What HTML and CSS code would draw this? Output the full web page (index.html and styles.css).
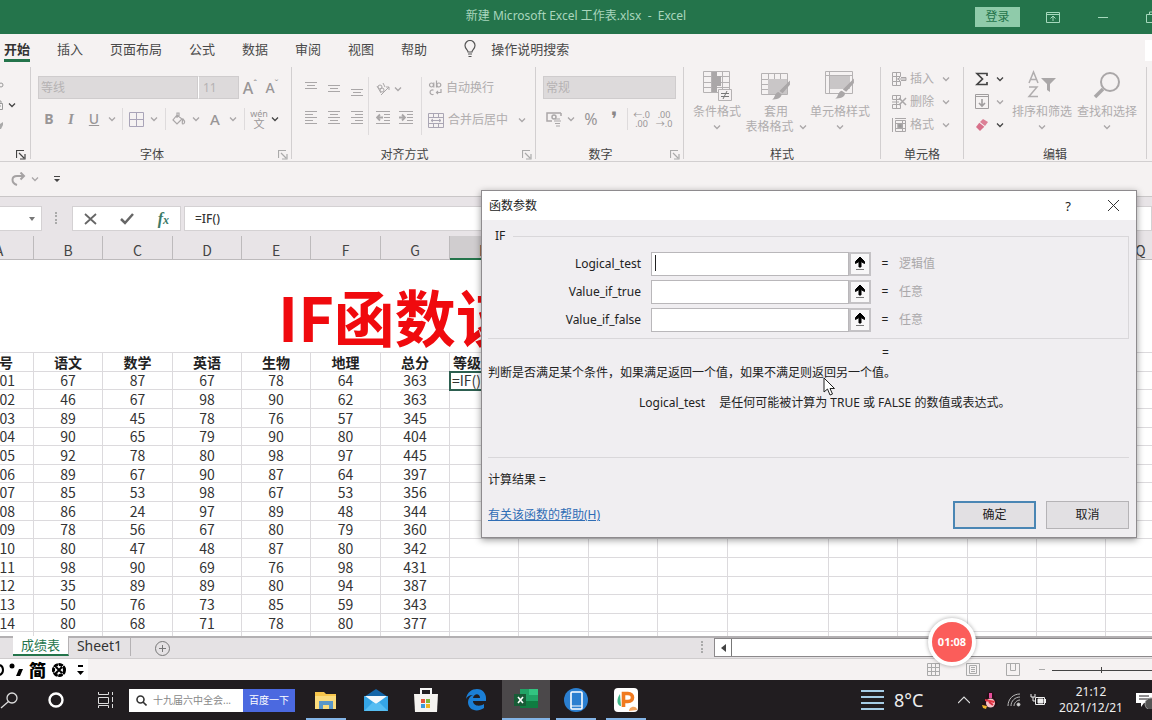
FILE: index.html
```html
<!DOCTYPE html>
<html lang="zh-CN">
<head>
<meta charset="utf-8">
<title>新建 Microsoft Excel 工作表.xlsx - Excel</title>
<link rel="stylesheet" href="styles.css">
</head>
<body>
<svg class="defs" aria-hidden="true">
  <symbol id="chev" viewBox="0 0 8 8"><path d="M1 2.5 4 5.5 7 2.5" fill="none" stroke="currentColor" stroke-width="1.3"/></symbol>
  <symbol id="launch" viewBox="0 0 10 10"><path d="M.5 8V.5H8M3 3l5 5M9 4v5H4" fill="none" stroke="currentColor" stroke-width="1.2"/></symbol>
  <symbol id="brush" viewBox="0 0 20 20"><path d="M19 1v4l-7 8-3-2zM8 12l3 2c0 4-5 5-9 5 3-1 2-6 6-7z" fill="#aaa7a8"/></symbol>
  <symbol id="pick" viewBox="0 0 16 18"><path d="M8 2 3.500 6.500v2L7 6.500V12h2V6.500l3.500 2v-2z" fill="#000" stroke="#000"/><path d="M4 14.500h8" stroke="#777"/></symbol>
</svg>
<div class="app">
  <header class="titlebar">
    <h1 class="doc-title">新建 Microsoft Excel 工作表.xlsx&nbsp; -&nbsp; Excel</h1>
    <div class="window-tools">
      <button class="login">登录</button>
      <button aria-label="功能区显示选项"><svg width="14" height="12" viewBox="0 0 14 12" fill="none" stroke="#a6d9bd"><path d="M.5 1.500h13v10H.5zM.5 3.500h13M7 10V5.500M4.500 7.500 7 5l2.500 2.500"/></svg></button>
      <button aria-label="最小化"><svg width="10" height="10" viewBox="0 0 10 10"><path d="M0 5.500h10" stroke="#a6d9bd"/></svg></button>
      <button aria-label="还原"><svg width="12" height="12" viewBox="0 0 12 12" fill="none" stroke="#a6d9bd"><path d="M.5 3.500h8v8h-8zM3.500 3V1h8v8H9"/></svg></button>
    </div>
  </header>

  <nav class="tabs">
    <button class="tab active">开始</button><button class="tab">插入</button><button class="tab">页面布局</button><button class="tab">公式</button><button class="tab">数据</button><button class="tab">审阅</button><button class="tab">视图</button><button class="tab">帮助</button>
    <button class="tab tell"><svg width="14" height="18" viewBox="0 0 14 18" fill="none" stroke="#555" stroke-width="1.200"><path d="M5 12c0-2-3-3-3-6.500a5 5 0 0 1 10 0C12 9 9 10 9 12zM5 14h4M5.500 16.500h3"/></svg>操作说明搜索</button>
    <span class="share"></span>
  </nav>

  <section class="ribbon">
    <div class="group">
      <div class="clip">
        <svg width="8" height="12" viewBox="0 0 8 12" fill="none" stroke="#999"><circle cx="1" cy="7" r="2"/></svg>
        <div><svg width="8" height="12" viewBox="0 0 8 12" fill="none" stroke="#999"><path d="M0 2h1v2M0 4.500h2.500v6H0M0 7h1"/></svg><svg class="chev dark"><use href="#chev"/></svg></div>
        <svg width="8" height="12" viewBox="0 0 8 12"><path d="M0 4l3-2v3L1 9H0z" fill="#aaa"/></svg>
      </div>
      <div class="group-name"><svg class="launch dark"><use href="#launch"/></svg></div>
    </div>

    <div class="group">
      <div class="group-body rows">
        <div class="font-selects">
          <select aria-label="字体" class="box"><option>等线</option></select>
          <select aria-label="字号" class="box"><option>11</option></select>
          <button class="grow" aria-label="增大字号">A<sup>ˆ</sup></button>
          <button class="grow small" aria-label="减小字号">A<sup>ˇ</sup></button>
        </div>
        <div class="font-row">
          <button class="b">B</button><button class="i">I</button><button class="u">U</button><svg class="chev"><use href="#chev"/></svg>
          <i class="bar"></i>
          <button aria-label="边框"><svg width="15" height="15" viewBox="0 0 15 15" fill="none" stroke="#a9a4b8"><path d="M.5.5h14v14H.5zM7.500 1v13M1 7.500h13"/></svg></button><svg class="chev"><use href="#chev"/></svg>
          <i class="bar"></i>
          <button aria-label="填充颜色"><svg width="14" height="14" viewBox="0 0 14 14" fill="none" stroke="#aaa7a8" stroke-width="1.200"><path d="M5 3 1 8l4 4 5-5zM5 6V1h2v4M11 7c3 3 1 5 0 5s-1-2 0-5z"/></svg></button><svg class="chev"><use href="#chev"/></svg>
          <button class="a">A</button><svg class="chev"><use href="#chev"/></svg>
          <i class="bar"></i>
          <button class="wen"><span>wén</span><span>文</span></button><svg class="chev dark"><use href="#chev"/></svg>
        </div>
      </div>
      <div class="group-name">字体<svg class="launch"><use href="#launch"/></svg></div>
    </div>

    <div class="group">
      <div class="group-body align">
        <div class="align-grid">
          <svg viewBox="0 0 14 16"><path d="M1 1.500h12M3 4.500h8M1 7.500h12"/></svg>
          <svg viewBox="0 0 14 16"><path d="M1 4.500h12M3 7.500h8M1 10.500h12"/></svg>
          <svg viewBox="0 0 14 16"><path d="M1 8.500h12M3 11.500h8M1 14.500h12"/></svg>
          <svg viewBox="0 0 14 16"><path d="M1 1.500h12M1 4.500h8M1 7.500h12M1 10.500h8M1 13.500h12"/></svg>
          <svg viewBox="0 0 14 16"><path d="M1 1.500h12M3 4.500h8M1 7.500h12M3 10.500h8M1 13.500h12"/></svg>
          <svg viewBox="0 0 14 16"><path d="M1 1.500h12M5 4.500h8M1 7.500h12M5 10.500h8M1 13.500h12"/></svg>
        </div>
        <i class="bar"></i>
        <div class="align-grid two">
          <svg viewBox="0 0 14 16"><circle cx="4" cy="6" r="2"/><circle cx="6" cy="9" r="2"/><path d="M1 5l4 7M5 14l8-8M10 6h3v3M7 2l2 4"/></svg>
          <svg class="chev"><use href="#chev"/></svg>
          <svg viewBox="0 0 14 16"><path d="M0 1.500h14M8 4.500h6M8 7.500h6M8 10.500h6M0 13.500h14"/><path d="M7 7.500H1M4 4.500l-3 3 3 3" stroke-width="1.800"/></svg>
          <svg viewBox="0 0 14 16"><path d="M0 1.500h14M8 4.500h6M8 7.500h6M8 10.500h6M0 13.500h14"/><path d="M0 7.500h6M3 4.500l3 3-3 3" stroke-width="1.800"/></svg>
        </div>
        <i class="bar"></i>
        <div class="wraps">
          <button><svg width="14" height="16" viewBox="0 0 14 16" fill="none" stroke="#aaa7a8" stroke-width="1.200"><circle cx="3.500" cy="5" r="2"/><path d="M5.800 2.500V7.500M8.500.5v7M5.500 10.200a2.300 2.300 0 1 0 0 4M13 9v3.500H8.500M10 11l-1.500 1.500L10 14"/><circle cx="10.800" cy="5" r="2"/></svg>自动换行</button>
          <button><svg width="16" height="15" viewBox="0 0 16 15" fill="none" stroke="#aaa6b4"><path d="M.5.5h15v14H.5zM.5 4.500h15M.5 10.500h15M5.500.5v4M10.500.5v4M5.500 10.500v4M10.500 10.500v4M3 7.500h10M5 6 3 7.500 5 9M11 6l2 1.500L11 9"/></svg>合并后居中<svg class="chev"><use href="#chev"/></svg></button>
        </div>
      </div>
      <div class="group-name">对齐方式<svg class="launch"><use href="#launch"/></svg></div>
    </div>

    <div class="group">
      <div class="group-body rows">
        <select aria-label="数字格式" class="box"><option>常规</option></select>
        <div class="num-row">
          <button aria-label="会计数字格式"><svg width="17" height="15" viewBox="0 0 17 15" fill="none" stroke="#aaa7a8" stroke-width="1.500"><path d="M15 1H1v8h5M15 1v3"/><circle cx="8" cy="5" r="2"/><path d="M8 9h7M9 11.500h5M10 14h4M9 7h5" stroke-width="1"/></svg></button><svg class="chev"><use href="#chev"/></svg>
          <button class="pct">%</button><button class="comma">❜</button><i class="bar"></i>
          <button class="dec"><span>←.0</span><span>.00</span></button><button class="dec"><span>.00</span><span>→.0</span></button>
        </div>
      </div>
      <div class="group-name">数字<svg class="launch"><use href="#launch"/></svg></div>
    </div>

    <div class="group">
      <div class="group-body styles">
        <button class="big"><svg width="30" height="32" viewBox="0 0 30 32" fill="none" stroke="#b5b2b3"><path d="M1.500 1.500h26v21h-26zM1.500 6.500h26M1.500 12.500h26M1.500 17.500h26M9.500 1v21M20.500 1v21"/><path d="M10 2h5v20h-5zM15 6h4v10h-4z" fill="#aaa7a8" stroke="none"/><path d="M16.500 19.500h13v11h-13z" fill="#f5f1f2"/><path d="M19 23.500h8M19 26.500h8M25 21l-4 8" stroke="#777"/></svg><span>条件格式</span><svg class="chev"><use href="#chev"/></svg></button>
        <button class="big"><svg width="32" height="32" viewBox="0 0 32 32" fill="none" stroke="#b5b2b3"><path d="M1.500 3.500h26v21h-26zM1.500 9.500h26M1.500 14.500h26M1.500 19.500h26M8.500 3v21M14.500 3v21M20.500 3v21"/><path d="M8 9h19v15H8z" fill="#c9c6c7" stroke="none"/><svg x="10" y="9" width="21" height="22" stroke="none"><use href="#brush"/></svg></svg><span>套用</span><span>表格格式 <svg class="chev"><use href="#chev"/></svg></span></button>
        <button class="big"><svg width="32" height="32" viewBox="0 0 32 32" fill="none" stroke="#b5b2b3"><path d="M1.500 1.500h27v22h-27zM1.500 5.500h27M5.500 1v22"/><path d="M6 6h20v13H6z" fill="#c9c6c7" stroke="none"/><svg x="9" y="7" width="22" height="23" stroke="none"><use href="#brush"/></svg></svg><span>单元格样式</span><svg class="chev"><use href="#chev"/></svg></button>
      </div>
      <div class="group-name">样式</div>
    </div>

    <div class="group">
      <div class="group-body cells">
        <button><svg width="16" height="16" viewBox="0 0 16 16" fill="none" stroke="#aaa7a8"><path d="M1.500 1.500h8v4h-8zM1.500 10.500h8v4h-8zM5.500 1.500v13M1.500 5.500v5M5 8h10M9 6 7 8l2 2M10 6.500h5v3h-5"/></svg>插入<svg class="chev"><use href="#chev"/></svg></button>
        <button><svg width="16" height="16" viewBox="0 0 16 16" fill="none" stroke="#aaa7a8"><path d="M1.500 1.500h8v4h-8zM1.500 10.500h8v4h-8zM5.500 1.500v13M1 8h7"/><path d="M8 4l7 7M15 4l-7 7" stroke-width="1.500"/></svg>删除<svg class="chev"><use href="#chev"/></svg></button>
        <button><svg width="16" height="16" viewBox="0 0 16 16" fill="none" stroke="#aaa7a8"><path d="M4.500 3.500h10v11h-10zM1.500 1v14M4 1.500h11M4.500 6.500h10M4.500 11.500h10M11.500 4v10M7 7h4v4H7z"/><path d="M7 7h4v4H7z" fill="#999"/></svg>格式<svg class="chev"><use href="#chev"/></svg></button>
      </div>
      <div class="group-name">单元格</div>
    </div>

    <div class="group">
      <div class="group-body edit">
        <div class="edit-tools">
          <button aria-label="自动求和"><svg width="14" height="14" viewBox="0 0 14 14" fill="none" stroke="#444" stroke-width="1.700"><path d="M12 4V1.500H2L7.500 7 2 12.500h10V10"/></svg><svg class="chev dark"><use href="#chev"/></svg></button>
          <button aria-label="填充"><svg width="14" height="15" viewBox="0 0 14 15" fill="none" stroke="#a09d9e"><path d="M.5.5h13v14H.5zM.5 2.500h13"/><path d="M7 5v7M4 9l3 3 3-3" stroke-width="1.600"/></svg><svg class="chev"><use href="#chev"/></svg></button>
          <button aria-label="清除"><svg width="14" height="14" viewBox="0 0 14 14"><path d="M8 1 13 4 10 8 5 4z" fill="#dc8096"/><path d="M4.300 4.700 9.300 8.800 5 13 1 9z" fill="#d8708a"/></svg><svg class="chev dark"><use href="#chev"/></svg></button>
        </div>
        <button class="big"><svg width="30" height="32" viewBox="0 0 30 32" fill="none" stroke="#b0adae" stroke-width="1.500"><path d="M2 13 6.500 2 11 13M3.500 9.500h6M2 17h8L2 26.500h9"/><path d="M14 8h15l-6 6v8l-3-2v-6z" fill="#aaa7a8" stroke="none"/></svg><span>排序和筛选</span><svg class="chev"><use href="#chev"/></svg></button>
        <button class="big"><svg width="30" height="32" viewBox="0 0 30 32" fill="none" stroke="#aaa7a8"><circle cx="18" cy="12" r="9" stroke-width="2"/><path d="M11 19 3 27" stroke-width="3.500"/></svg><span>查找和选择</span><svg class="chev"><use href="#chev"/></svg></button>
      </div>
      <div class="group-name">编辑</div>
    </div>
  </section>

  <div class="quick">
    <svg width="15" height="14" viewBox="0 0 15 14" fill="none" stroke="#a5a2a3" stroke-width="2"><path d="M6 13C0 11 0 4 6 4h7M9.500.5 13 4 9.500 7.500"/></svg>
    <svg class="chev"><use href="#chev"/></svg>
    <svg class="more" width="8" height="8" viewBox="0 0 8 8"><path d="M1 1h6v1H1zM1 4h6L4 7z" fill="#444"/></svg>
  </div>

  <div class="formula">
    <div class="name-box"><svg width="8" height="6" viewBox="0 0 8 6"><path d="M1 1h6L4 5z" fill="#777"/></svg></div>
    <span class="dots"></span>
    <div class="fx">
      <button aria-label="取消输入"><svg width="13" height="12" viewBox="0 0 13 12" fill="none" stroke="#666" stroke-width="1.800"><path d="M1 1l11 10M12 1 1 11"/></svg></button>
      <button aria-label="输入"><svg width="14" height="12" viewBox="0 0 14 12" fill="none" stroke="#666" stroke-width="2.500"><path d="M1 6l4 4 8-9"/></svg></button>
      <button class="fn" aria-label="插入函数">f<small>x</small></button>
    </div>
    <input aria-label="编辑栏" value="=IF()">
  </div>

  <main class="sheet">
    <table>
      <colgroup><col class="c69"><col class="c69"><col class="c70"><col class="c69"><col class="c69"><col class="c70"><col class="c69"><col class="c69"><col class="c70"><col class="c69"><col class="c70"><col class="c101"><col class="c69"><col class="c70"><col class="c69"><col class="c69"><col class="c70"></colgroup>
      <thead><tr><th>A</th><th>B</th><th>C</th><th>D</th><th>E</th><th>F</th><th>G</th><th class="sel">H</th><th>I</th><th>J</th><th>K</th><th>L</th><th>M</th><th>N</th><th>O</th><th>P</th><th>Q</th></tr></thead>
      <tbody id="grid">
        <tr class="title-row"><td colspan="17">IF函数该</td></tr>
        <tr class="head-row"><td>学号</td><td>语文</td><td>数学</td><td>英语</td><td>生物</td><td>地理</td><td>总分</td><td>等级</td><td></td><td></td><td></td><td></td><td></td><td></td><td></td><td></td><td></td></tr>
      </tbody>
    </table>
  </main>

  <div class="sheet-bar">
    <button class="sheet-tab on">成绩表</button>
    <button class="sheet-tab">Sheet1</button>
    <button class="add" aria-label="新工作表"><svg width="15" height="15" viewBox="0 0 15 15" fill="none" stroke="#777"><circle cx="7.500" cy="7.500" r="7"/><path d="M7.500 4v7M4 7.500h7"/></svg></button>
    <span class="dots"></span>
    <div class="scroll"><button aria-label="向左滚动"><svg width="5" height="8" viewBox="0 0 5 8"><path d="M5 0v8L0 4z" fill="#444"/></svg></button></div>
  </div>

  <div class="status">
    <div class="ime">
      <svg width="4" height="16" viewBox="0 0 4 16"><path d="M0 3c4 2 4 8 0 10" fill="none" stroke="#000" stroke-width="2"/></svg>
      <svg width="15" height="14" viewBox="0 0 15 14"><circle cx="3" cy="3" r="2.500"/><path d="M10 6h4l-3 7H7z"/></svg>
      <b>简</b>
      <svg width="16" height="16" viewBox="0 0 16 16"><circle cx="8" cy="8" r="5.500" fill="none" stroke="#000" stroke-width="3" stroke-dasharray="4 1"/><circle cx="8" cy="8" r="6" fill="none" stroke="#000"/><path d="M5 5l6 6M11 5l-6 6" stroke="#000" stroke-width="2"/></svg>
      <svg width="7" height="12" viewBox="0 0 7 12"><path d="M1 1h5v2H1zM0 7h7L3.500 11z"/></svg>
    </div>
    <div class="views">
      <svg width="13" height="13" viewBox="0 0 13 13"><path d="M.5.5h12v12H.5zM4.500 0v13M8.500 0v13M0 4.500h13M0 8.500h13"/></svg>
      <svg width="14" height="13" viewBox="0 0 14 13"><path d="M.5.5h13v12H.5zM3.500 2.500h7v8h-7zM5 4.500h4M5 6.500h4M5 8.500h4"/></svg>
      <svg width="14" height="13" viewBox="0 0 14 13"><path d="M.5.5h13v12H.5zM4.500 0v7.500h5V0"/></svg>
    </div>
    <span class="zoom-out"></span>
    <svg class="zoom" width="100" height="8" viewBox="0 0 100 8" stroke="#444"><path d="M0 4.500h100M49.500 1v6"/></svg>
  </div>

  <footer class="taskbar">
    <button class="tb find" aria-label="搜索"><svg width="18" height="18" viewBox="0 0 18 18" fill="none" stroke="#ddd" stroke-width="1.300"><circle cx="12" cy="7" r="5"/><path d="M8.500 10.500 1 17"/></svg></button>
    <button class="tb cortana" aria-label="Cortana"><svg width="16" height="16" viewBox="0 0 16 16"><circle cx="8" cy="8" r="6.500" fill="none" stroke="#fff" stroke-width="2.400"/></svg></button>
    <button class="tb view" aria-label="任务视图"><svg width="18" height="16" viewBox="0 0 18 16" fill="none" stroke="#ddd"><path d="M1.500 0v2.500h10V0M1.500 5.500h10v6h-10zM1.500 16v-2.500h10V16M15.500 0v3M15.500 5v5M15.500 12v4"/></svg></button>
    <form class="search">
      <label for="q"><svg width="11" height="11" viewBox="0 0 11 11" fill="none" stroke="#333" stroke-width="1.600"><circle cx="4.500" cy="4.500" r="3.500"/><path d="M7 7l3.500 3.500"/></svg></label>
      <input id="q" placeholder="十九届六中全会...">
      <button type="button">百度一下</button>
    </form>
    <div class="apps">
      <button class="app-btn run" aria-label="文件资源管理器"><svg width="22" height="19" viewBox="0 0 22 19"><path d="M0 1h9l2 2h10v15H0z" fill="#f7c64c"/><path d="M0 5h21v13H0z" fill="#fbdc7d"/><path d="M4 10h14v8h-4v-4H8v4H4z" fill="#5a97c9"/></svg></button>
      <button class="app-btn" aria-label="邮件"><svg width="24" height="22" viewBox="0 0 24 22"><path d="M0 8 12 0l12 8z" fill="#1265a8"/><path d="M0 7h24v15H0z" fill="#35a5e6"/><path d="M1 7h22L12 15z" fill="#f4f8fb"/><path d="M0 22 9 13l3 2 3-2 9 9z" fill="#56bdf2"/></svg></button>
      <button class="app-btn" aria-label="应用商店"><svg width="24" height="24" viewBox="0 0 24 24"><path d="M7 7V1h10v6" fill="none" stroke="#f5f5f5" stroke-width="2"/><path d="M0 6h24l-1 18H1z" fill="#f5f3f0"/><path d="M7 11h4v4H7z" fill="#e4573b"/><path d="M12 11h4v4h-4z" fill="#83b83a"/><path d="M7 16h4v4H7z" fill="#3b9bdc"/><path d="M12 16h4v4h-4z" fill="#f0b51f"/></svg></button>
      <button class="app-btn" aria-label="Edge"><svg width="22" height="22" viewBox="0 0 22 22"><path d="M1 10C2 3 7 0 12 0c6 0 9 5 9 9v3H8c0 5 7 6 11 3v4c-7 5-16 2-16-6 0-3 2-6 5-7-4 0-6 2-7 4zM8 9h7c0-5-6-5-7 0z" fill="#1b7fd6" fill-rule="evenodd"/></svg></button>
      <button class="app-btn run current" aria-label="Excel"><svg width="24" height="22" viewBox="0 0 24 22"><path d="M6 0h18v19H6z" fill="#21a366"/><path d="M15 0h9v6h-9z" fill="#33c481"/><path d="M15 12h9v7H6v-7z" fill="#107c41"/><path d="M0 5h12v12H0z" fill="#185c37"/><path d="M4 8l5 6M9 8l-5 6" stroke="#fff" stroke-width="1.600"/></svg></button>
      <button class="app-btn run" aria-label="手机助手"><svg width="24" height="24" viewBox="0 0 24 24"><circle cx="12" cy="12" r="12" fill="#2b7fd0"/><rect x="7" y="4" width="11" height="17" rx="1" fill="#2b7fd0" stroke="#fff" stroke-width="1.600"/><path d="M7 18h11" stroke="#fff"/></svg></button>
      <button class="app-btn run" aria-label="屏幕录制"><svg width="24" height="24" viewBox="0 0 24 24"><rect width="24" height="24" rx="4" fill="#fff"/><path d="M6 6c-4 5-3 12 1 12z" fill="#41b98b"/><path d="M9.500 19V5.500H14c6 0 6 8 0 8h-3" fill="none" stroke="#f07a20" stroke-width="3.600"/><path d="M15 23c0-5 8-6 8-1z" fill="#f3a45e"/></svg></button>
    </div>
    <div class="tray">
      <svg width="23" height="20" viewBox="0 0 23 20" stroke="#a6cde6" stroke-width="2"><path d="M0 1h23M0 7h23M0 13h23M0 19h23"/></svg>
      <span class="temp">8°C</span>
      <svg class="up" width="12" height="8" viewBox="0 0 12 8" fill="none" stroke="#ddd" stroke-width="1.200"><path d="M0 7l6-6 6 6"/></svg>
      <svg class="qq" width="16" height="17" viewBox="0 0 16 17"><path d="M6 0h5l2 7 3 5-3 3H2L0 11l4-4z" fill="#241017"/><path d="M7 1h3v5H7z" fill="#e64d9b"/><circle cx="8.500" cy="11" r="4.500" fill="#f9c2c9"/><path d="M3 7l10 2-1 2L3 9z" fill="#e23643"/><path d="M0 13l5 1-1 3-3-1z" fill="#f0b52c"/><path d="M7 10l4 3" stroke="#d92e42" stroke-width="2"/></svg>
      <svg class="wifi" width="14" height="14" viewBox="0 0 14 14" fill="none" stroke="#bbb"><path d="M1 13C1 6 6 1 13 1M4 13c0-5 4-9 9-9M7 13c0-3 3-6 6-6"/><circle cx="11.500" cy="11.500" r="1.500" fill="#ddd"/></svg>
      <svg class="bat" width="17" height="12" viewBox="0 0 17 12" fill="none" stroke="#eee"><path d="M5.500 3.500h9v7h-9zM15.500 5v4M1 0v3h4V0M3 3v4h2"/><path d="M8 5h5v4H8z" fill="#eee"/></svg>
      <time>21:12<br>2021/12/21</time>
      <svg class="note" width="16" height="18" viewBox="0 0 16 18"><path d="M0 2h16v10H8l-3 4v-4H0z" fill="#fff"/><path d="M3 5h10M3 8h10" stroke="#211d20"/><circle cx="15" cy="13" r="6" fill="#555" stroke="#999"/></svg>
    </div>
  </footer>

  <section class="dialog" role="dialog" aria-labelledby="dt">
    <div class="dialog-title"><h2 id="dt">函数参数</h2><button aria-label="帮助">?</button><button aria-label="关闭"><svg width="11" height="11" viewBox="0 0 11 11" stroke="#333"><path d="M0 0l11 11M11 0 0 11"/></svg></button></div>
    <div class="dialog-body">
      <fieldset>
        <legend>IF</legend>
        <div class="arg"><label for="a1">Logical_test</label><span class="field"><input id="a1"><i class="caret"></i><button aria-label="选择区域"><svg width="16" height="18"><use href="#pick"/></svg></button></span><span class="eq">=</span><span class="hint">逻辑值</span></div>
        <div class="arg"><label for="a2">Value_if_true</label><span class="field"><input id="a2"><button aria-label="选择区域"><svg width="16" height="18"><use href="#pick"/></svg></button></span><span class="eq">=</span><span class="hint">任意</span></div>
        <div class="arg"><label for="a3">Value_if_false</label><span class="field"><input id="a3"><button aria-label="选择区域"><svg width="16" height="18"><use href="#pick"/></svg></button></span><span class="eq">=</span><span class="hint">任意</span></div>
      </fieldset>
      <p class="result">=</p>
      <p class="about">判断是否满足某个条件，如果满足返回一个值，如果不满足则返回另一个值。</p>
      <p class="param"><span>Logical_test</span><span>是任何可能被计算为 TRUE 或 FALSE 的数值或表达式。</span></p>
      <p class="calc">计算结果 =</p>
      <div class="actions"><a href="#help">有关该函数的帮助(H)</a><button class="ok">确定</button><button>取消</button></div>
    </div>
  </section>

  <div class="timer">01:08</div>
  <svg class="cursor" width="13" height="19" viewBox="0 0 13 19"><path d="M1 1v14l3.500-3 2.500 6 2.500-1L7 11.500h4.500z" fill="#fff" stroke="#222"/></svg>
</div>
<script src="grid.js"></script>
</body>
</html>
```

FILE: grid.js
```js
const scores = [
  [67, 87, 67, 78, 64, 363], [46, 67, 98, 90, 62, 363], [89, 45, 78, 76, 57, 345],
  [90, 65, 79, 90, 80, 404], [92, 78, 80, 98, 97, 445], [89, 67, 90, 87, 64, 397],
  [85, 53, 98, 67, 53, 356], [86, 24, 97, 89, 48, 344], [78, 56, 67, 80, 79, 360],
  [80, 47, 48, 87, 80, 342], [98, 90, 69, 76, 98, 431], [35, 89, 89, 80, 94, 387],
  [50, 76, 73, 85, 59, 343], [80, 68, 71, 78, 80, 377], []
];
const body = document.getElementById('grid');
scores.forEach((row, r) => {
  const tr = body.insertRow();
  for (let c = 0; c < 17; c++) {
    const td = tr.insertCell();
    if (!row.length) { td.textContent = '\u00a0'; continue; }
    if (c === 0) td.textContent = String(r + 1).padStart(2, '0');
    else if (c < 7) td.textContent = row[c - 1];
    else if (c === 7 && r === 0) { td.textContent = '=IF()'; td.className = 'editing'; }
  }
});
```

FILE: styles.css
```css
* { box-sizing: border-box; }
body { margin: 0; font: 12px/16px "Noto Sans", "Noto Sans CJK SC", sans-serif; color: #333; }
button, input, select { font: inherit; color: inherit; border: 0; background: none; padding: 0; margin: 0; border-radius: 0; }
button { display: flex; align-items: center; justify-content: center; white-space: nowrap; }
h1, h2, p { margin: 0; font-size: 12px; font-weight: 400; }
svg { flex: none; display: block; }
.defs { position: absolute; width: 0; height: 0; }
.app { position: relative; display: flex; flex-direction: column; height: 100vh; overflow: hidden; background: #f5f2f2; }

.titlebar { position: relative; flex: none; height: 34px; background: #24744b; display: flex; align-items: center; justify-content: center; color: #a9d6bd; }
.doc-title { padding-bottom: 2px; white-space: nowrap; }
.window-tools { position: absolute; right: -6px; top: 7px; display: flex; align-items: center; gap: 38px; }
.login { width: 45px; height: 20px; background: #8fcbaa; color: #24744b; margin-right: -12px; }

.tabs { flex: none; height: 33px; display: flex; gap: 27px; padding: 6px 0 0 4px; font-size: 13px; line-height: 18px; color: #4a4a4a; overflow: hidden; }
.tab { height: 22px; align-items: flex-start; flex: none; }
.tab.active { font-weight: 700; border-bottom: 3px solid #24744b; color: #333; }
.tell { gap: 14px; margin-left: 9px; }
.share { margin-left: auto; width: 7px; height: 21px; background: #fff; }

.ribbon { flex: none; height: 95px; display: grid; grid-template-columns: 31px 261px 244px 148px 197px 83px 183px 1fr; border-bottom: 1px solid #d2cfd0; color: #b0adae; }
.group { display: flex; flex-direction: column; border-right: 1px solid #d2cfd0; margin-bottom: 4px; min-width: 0; }
.group-body { flex: 1; }
.group-name { position: relative; height: 17px; text-align: center; color: #444; line-height: 26px; margin-right: 18px; }
.group:nth-child(5) .group-name, .group:nth-child(6) .group-name, .group:nth-child(7) .group-name { margin-right: 0; }
.launch { position: absolute; right: -15px; bottom: -1px; width: 10px; height: 10px; color: #aaa; }
.chev { width: 8px; height: 8px; color: #aaa7a8; justify-self: center; align-self: center; }
.dark { color: #444; }
.clip { flex: 1; display: flex; flex-direction: column; gap: 9px; padding-top: 11px; }
.clip div { display: flex; }
.group:first-child .launch { right: -14px; }
.bar { width: 1px; background: #dedbdc; justify-self: center; }
.rows { padding: 9px 7px 0; display: flex; flex-direction: column; gap: 9px; }
.box { height: 23px; width: 100%; background: #dddadb; border: 1px solid #cfcccd; color: #b5b2b3; padding: 0 2px; appearance: none; opacity: 1; }
.font-selects { display: grid; grid-template-columns: 160px 41px 22px 22px; align-items: center; }
.font-selects .box + .box { border-left-color: #fff; padding-left: 4px; }
.grow { font-size: 16px; font-weight: 500; color: #999697; }
.grow.small { font-size: 14px; }
.grow sup { font-size: 9px; line-height: 8px; align-self: flex-start; }
.font-row { display: grid; height: 22px; grid-template-columns: 22px 22px 24px 12px 8px 20px 16px 6px 22px 12px 26px 10px 12px 18px 14px; }
.font-row button { font-size: 14px; color: #999697; }
.font-row .b { font-weight: 700; }
.font-row .i { font: italic 700 15px "Liberation Serif", serif; }
.font-row .u { text-decoration: underline; font-weight: 500; }
.font-row .a { font-size: 15px; font-weight: 500; }
.font-row .wen { flex-direction: column; font-size: 9px; line-height: 8px; }
.wen span + span { font-size: 11px; line-height: 11px; }

.align { display: flex; padding: 10px 0 7px 7px; }
.align-grid { display: grid; grid-template-columns: 23px 23px 23px; grid-template-rows: 24px 34px; align-items: center; justify-items: center; }
.align-grid.two { grid-template-columns: 23px 23px; margin: 0 4px 0 2px; }
.align-grid svg:not(.chev) { width: 14px; height: 16px; fill: none; stroke: #aaa7a8; }
.align-grid.two .chev { justify-self: start; }
.wraps { padding-left: 6px; display: grid; grid-template-rows: 22px 24px; row-gap: 9px; }
.wraps button { justify-content: flex-start; gap: 4px; }
.wraps .chev { margin-left: 6px; }

.num-row { display: grid; height: 22px; grid-template-columns: 22px 12px 28px 18px 8px 21px 24px; }
.pct { font-size: 16px; color: #999697; }
.comma { font-size: 20px; color: #8a8788; }
.num-row .dec { flex-direction: column; font-size: 9px; line-height: 9px; color: #999697; }

.big { flex-direction: column; justify-content: flex-start; line-height: 15px; }
.big > svg:first-child { margin-bottom: 2px; }
.big > span { display: flex; align-items: center; gap: 5px; }
.big > .chev { margin-top: 4px; }
.styles { display: grid; grid-template-columns: 58px 60px 68px; padding: 3px 0 0 4px; align-content: start; align-items: start; }
.cells { display: grid; grid-template-rows: repeat(3, 23px); padding-left: 10px; }
.cells button { justify-content: flex-start; gap: 3px; }
.cells .chev { margin-left: 5px; }
.edit { display: grid; grid-template-columns: 46px 64px 66px; align-items: start; padding-top: 3px; }
.edit-tools { display: grid; grid-template-rows: repeat(3, 23px); padding-left: 11px; margin-top: -3px; }
.edit-tools button { gap: 7px; justify-content: flex-start; }

.quick { flex: none; height: 35px; display: flex; align-items: center; padding-left: 11px; gap: 5px; border-bottom: 1px solid #c9c6c7; }
.quick .more { margin-left: 9px; }
.formula { flex: none; height: 39px; background: #e8e4e7; display: flex; align-items: flex-start; padding-top: 9px; }
.name-box, .fx, .formula input { height: 25px; background: #fff; border: 1px solid #d4d1d3; display: flex; align-items: center; }
.name-box { width: 42px; justify-content: flex-end; padding-right: 5px; border-left: 0; }
.dots { width: 2px; height: 12px; border-left: 2px dotted #aaa; margin: 6px 15px 0 13px; }
.fx { width: 109px; justify-content: space-between; padding: 0 11px; }
.fn { font: italic 700 16px "Liberation Serif", serif; color: #3b7a68; }
.fn small { font-size: 12px; padding-top: 4px; }
.formula input { flex: 1; margin-left: 3px; padding-left: 10px; font-weight: 500; }

.sheet { flex: 1; min-height: 0; overflow: hidden; background: #fff; }
table { table-layout: fixed; width: 1211px; min-width: 1211px; height: 415px; margin-left: -35px; border-collapse: separate; border-spacing: 0; font-family: "Noto Sans CJK SC", sans-serif; font-size: 14px; line-height: 16px; }
.c69 { width: 69px; } .c70 { width: 70px; } .c101 { width: 101px; }
th, td { padding: 0; text-align: center; border-right: 1px solid #dcdadd; border-bottom: 1px solid #dcdadd; overflow: hidden; white-space: nowrap; }
th { height: 24px; background: #e8e4e7; font-weight: 400; border-color: #bdbabc; color: #444; padding-top: 5px; }
th.sel { background: #d0cdcf; border-bottom: 2px solid #24744b; }
.title-row td { height: 93px; text-align: left; padding: 19px 0 0 313px; color: #f00a0e; font-size: 61px; font-weight: 700; line-height: 60px; }
.head-row td { font-weight: 700; color: #222; }
.head-row td:nth-child(8) { text-align: left; padding-left: 3px; }
tr:not(.title-row):not(.head-row) td:first-child { text-align: right; padding-right: 18px; }
td.editing { text-align: left; padding-left: 2px; outline: 2px solid #2d5f50; outline-offset: -1px; }

.sheet-bar { flex: none; height: 23px; background: #e5e2e4; border-top: 2px solid #b3b0b2; border-bottom: 1px solid #cfcccd; display: flex; padding-left: 13px; }
.sheet-tab { font-size: 14px; width: 62px; height: 18px; border-right: 1px solid #b5b2b4; padding-bottom: 2px; }
.sheet-tab.on { width: 56px; height: 20px; margin-top: -2px; font-size: 13px; color: #24744b; background: #fff; border-bottom: 2px solid #24744b; padding: 0; }
.add { margin-left: 24px; }
.sheet-bar .dots { margin: 3px 11px 0 auto; }
.scroll { width: 438px; height: 19px; border: 1px solid #8c898b; border-right: 0; background: #fff; }
.scroll button { width: 17px; height: 17px; border-right: 1px solid #777; }

.status { flex: none; height: 21px; display: flex; align-items: center; }
.ime { width: 88px; height: 21px; background: #fff; display: flex; align-items: center; gap: 5px; color: #000; }
.ime b { font: 900 17px/20px "Noto Sans CJK SC", sans-serif; }
.ime svg:last-child { margin-left: 5px; }
.views { display: flex; gap: 26px; margin-left: auto; fill: none; stroke: #aaa; }
.zoom-out { width: 6px; height: 1px; background: #aaa; margin: 0 7px 0 19px; }

.taskbar { flex: none; height: 40px; background: #211d20; display: flex; align-items: center; color: #eee; }
.find { width: 30px; justify-content: flex-start; padding-right: 12px; }
.cortana { width: 52px; }
.view { width: 47px; padding-left: 0; }
.search { display: flex; width: 166px; height: 23px; background: #fff; margin: 0; }
.search label { width: 24px; display: flex; align-items: center; justify-content: center; }
.search input { flex: 1; min-width: 0; font-size: 10px; }
.search input::placeholder { color: #888; opacity: 1; }
.search button { width: 52px; background: #4b69e0; font-size: 10px; color: #fff; }
.apps { display: flex; height: 40px; margin-left: 7px; gap: 2px; }
.app-btn { width: 48px; position: relative; }
.run::after { content: ""; position: absolute; left: 4px; right: 4px; bottom: 0; height: 2px; background: #83b4e6; }
.current { background: #4b484a; }
.current::after { left: 0; right: 0; }
.tray { margin-left: auto; display: flex; align-items: center; height: 40px; }
.temp { font-size: 18px; margin-left: 10px; width: 64px; }
.up { margin: 0 12px 0 0; }
.wifi { margin: 0 9px; }
.tray time { width: 76px; text-align: center; margin: 0 7px 0 6px; }

.dialog { position: absolute; left: 481px; top: 190px; width: 656px; background: #f0eef1; border: 1px solid #8e8b8e; box-shadow: 0 2px 7px #0006; color: #222; }
.dialog-title { height: 29px; background: #fff; display: flex; align-items: center; padding: 0 17px 0 7px; }
.dialog-title h2 { margin-right: auto; }
.dialog-title button { margin-left: 37px; font-size: 13px; }
.dialog-body { padding: 8px 7px 8px 6px; }
fieldset { margin: 0; padding: 8px 0 6px; border: 0 solid #d9d7da; border-width: 1px 1px 1px 0; height: 111px; }
legend { padding: 0 8px 0 7px; line-height: 16px; }
.arg { display: grid; grid-template-columns: 163px 220px 28px 1fr; height: 24px; align-items: center; margin-bottom: 4px; }
.arg label { text-align: right; padding-right: 10px; }
.eq { text-align: center; }
.hint { color: #aaa8aa; }
.field { position: relative; display: flex; height: 24px; }
.field input { flex: 1; min-width: 0; border: 1px solid #b9b7ba; background: #fff; padding: 0 5px; }
.field button { width: 22px; border: 2px solid #c4c2c5; background: #f8f7f8; }
.caret { position: absolute; left: 4px; top: 3px; width: 1px; height: 16px; background: #222; }
.result { padding: 6px 0 4px 394px; line-height: 16px; }
.about { line-height: 16px; }
.param { display: flex; gap: 14px; padding: 14px 0 46px 151px; line-height: 16px; }
.calc { border-top: 1px solid #d9d7da; padding: 14px 0 13px; line-height: 16px; }
.actions { display: flex; align-items: center; gap: 10px; }
.actions a { margin-right: auto; color: #2f6db5; }
.actions button { width: 83px; height: 28px; background: #e2e0e3; border: 1px solid #b5b3b6; }
.actions .ok { border: 2px solid #4a86b4; }

.timer { position: absolute; left: 928px; top: 618px; width: 48px; height: 48px; border: 4px solid #fff; border-radius: 50%; background: #fb5d5a; box-shadow: 0 0 4px #0005; color: #fff; font-size: 11px; font-weight: 700; line-height: 40px; text-align: center; }
.cursor { position: absolute; left: 823px; top: 377px; }
```
